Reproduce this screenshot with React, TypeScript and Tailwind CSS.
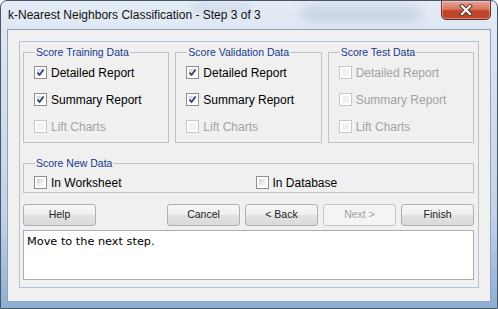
import React from 'react';

const labelFont = { fontFamily: '"Liberation Sans", Arial, sans-serif' };

function CheckBox({ checked = false, disabled = false }: { checked?: boolean; disabled?: boolean }) {
  return (
    <span
      className={`relative flex h-[13px] w-[13px] shrink-0 items-center justify-center border bg-white p-[2px] ${
        disabled ? 'border-[#c9c9c9]' : 'border-[#8e8f8f]'
      }`}
    >
      <span
        className={`h-full w-full ${
          disabled
            ? 'bg-[#f2f2f2]'
            : 'bg-[linear-gradient(135deg,#cbced3,#eef0f2_60%,#fbfbfb)]'
        }`}
      />
      {checked && (
        <svg className="absolute left-0 top-0" width="11" height="11" viewBox="0 0 11 11">
          <path d="M2.5 5.6 L4.6 7.9 L8.6 2.6" fill="none" stroke="#2c3f7d" strokeWidth="1.7" />
        </svg>
      )}
    </span>
  );
}

function Option({ text, checked, disabled }: { text: string; checked?: boolean; disabled?: boolean }) {
  return (
    <div className="flex h-[27px] items-center gap-[4px]">
      <CheckBox checked={checked} disabled={disabled} />
      <span className={`text-[12px] leading-none ${disabled ? 'text-[#a3a3a3]' : 'text-black'}`} style={labelFont}>
        {text}
      </span>
    </div>
  );
}

function Group({ title, children, className = '' }: { title: string; children: React.ReactNode; className?: string }) {
  return (
    <div className={`relative border border-[#c3c3c3] pl-[10px] ${className}`}>
      <span
        className="absolute left-[11px] top-[-7px] bg-[#f0f0f0] px-[1px] text-[10.5px] leading-[13px] text-[#16398c]"
        style={labelFont}
      >
        {title}
      </span>
      {children}
    </div>
  );
}

function Btn({ text, disabled = false }: { text: string; disabled?: boolean }) {
  return (
    <button
      className={`h-[22px] w-[73px] rounded-[3px] border text-[10.5px] ${
        disabled
          ? 'border-[#c5c5c5] bg-[#f4f4f4] text-[#a0a0a0]'
          : 'border-[#b0b0b0] bg-[linear-gradient(#f6f6f6,#eeeeee_50%,#e2e2e2_50%,#dadada)] text-[#222]'
      }`}
      style={labelFont}
    >
      {text}
    </button>
  );
}

export default function App() {
  return (
    <div className="h-[309px] w-[498px] overflow-hidden bg-white">
      <div className="relative flex h-[309px] w-[498px] flex-col overflow-hidden rounded-t-[7px] border border-[#4a5666] bg-[linear-gradient(#e4ecf6,#d3dfee_30%,#c2d3e8_70%,#8eaed4)] px-[6px]">
        {/* glass blur behind title */}
        <div className="absolute left-[300px] top-[6px] h-[14px] w-[120px] rounded-full bg-[#9fb0c4] opacity-40 blur-[6px]" />
        <div className="absolute left-[190px] top-[2px] h-[10px] w-[60px] rounded-full bg-[#a9b9cc] opacity-30 blur-[5px]" />

        <div className="relative flex h-[28px] shrink-0 items-center pl-[1px]">
          <span className="text-[12px] text-[#111]" style={labelFont}>
            k-Nearest Neighbors Classification - Step 3 of 3
          </span>
        </div>

        <div className="absolute right-[6px] top-[-1px] flex h-[20px] w-[50px] items-center justify-center rounded-b-[5px] border border-[#6b2b22] bg-[linear-gradient(#e9a597,#d6775f_45%,#c0432a_55%,#b8482c)] shadow-[inset_0_0_0_1px_rgba(255,255,255,0.35)]">
          <svg width="14" height="12" viewBox="0 0 14 12">
            <path d="M3 2 L11 10 M11 2 L3 10" stroke="#5a2a22" strokeWidth="4" strokeLinecap="square" />
            <path d="M3 2 L11 10 M11 2 L3 10" stroke="#ffffff" strokeWidth="2.2" strokeLinecap="square" />
          </svg>
        </div>

        <div className="h-[273px] shrink-0 border border-[#8fa3bd] bg-[#f0f0f0] px-[11px] pt-[11px]">
          <div className="h-[247px] border border-[#b2c4d9] bg-[#f0f0f0] pl-[3px] pr-[4px] pt-[10px]">
            <div className="grid grid-cols-3 gap-[6px]">
              <Group title="Score Training Data" className="pb-[2px] pt-[6px]">
                <Option text="Detailed Report" checked />
                <Option text="Summary Report" checked />
                <Option text="Lift Charts" disabled />
              </Group>
              <Group title="Score Validation Data" className="pb-[2px] pt-[6px]">
                <Option text="Detailed Report" checked />
                <Option text="Summary Report" checked />
                <Option text="Lift Charts" disabled />
              </Group>
              <Group title="Score Test Data" className="pb-[2px] pt-[6px]">
                <Option text="Detailed Report" disabled />
                <Option text="Summary Report" disabled />
                <Option text="Lift Charts" disabled />
              </Group>
            </div>

            <Group title="Score New Data" className="mt-[20px] pb-[3px] pt-[12px]">
              <div className="grid h-[13px] grid-cols-2">
                <div className="flex items-center gap-[4px]">
                  <CheckBox />
                  <span className="text-[12px] leading-none" style={labelFont}>In Worksheet</span>
                </div>
                <div className="flex items-center gap-[4px] pl-[2px]">
                  <CheckBox />
                  <span className="text-[12px] leading-none" style={labelFont}>In Database</span>
                </div>
              </div>
            </Group>

            <div className="mt-[11px] flex justify-between">
              <Btn text="Help" />
              <div className="flex gap-[5px]">
                <Btn text="Cancel" />
                <Btn text="< Back" />
                <Btn text="Next >" disabled />
                <Btn text="Finish" />
              </div>
            </div>

            <div
              className="mt-[4px] h-[50px] border border-[#abadb3] bg-white px-[3px] pt-[4px] text-[11.3px] leading-[14px] text-black"
              style={{ fontFamily: '"DejaVu Sans", Verdana, sans-serif' }}
            >
              Move to the next step.
            </div>
          </div>
        </div>
      </div>
    </div>
  );
}
